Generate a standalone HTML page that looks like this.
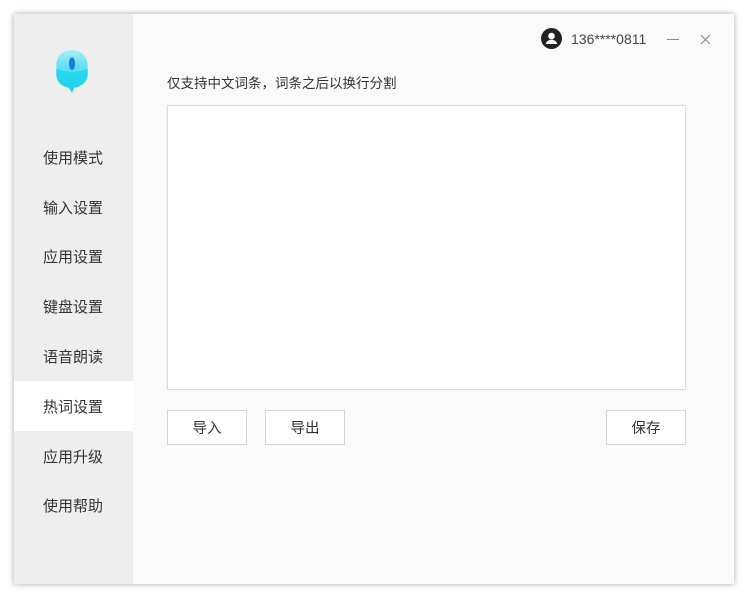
<!DOCTYPE html>
<html><head><meta charset="utf-8"><style>
*{margin:0;padding:0;box-sizing:border-box}
body{width:748px;height:598px;background:#fff;font-family:"Liberation Sans","Noto Sans CJK SC",sans-serif;position:relative;overflow:hidden}
.win{position:absolute;left:14px;top:14px;width:720px;height:570px;background:#fafafa;box-shadow:0 0 6px rgba(0,0,0,.35)}
.side{position:absolute;left:0;top:0;width:119px;height:570px;background:#eeeeee}
.item{position:absolute;left:0;width:119px;height:50px;line-height:54px;padding-left:29px;font-size:15px;color:#333}
.item.act{background:#fff}
.tip{position:absolute;left:153px;top:58px;font-size:13.5px;color:#333}
.ta{position:absolute;left:153px;top:91px;width:519px;height:285px;background:#fff;border:1px solid #ddd;box-shadow:0 0 2px rgba(0,0,0,.08)}
.btn{position:absolute;top:396px;width:80px;height:35px;border:1px solid #d5d5d5;background:#fff;font-size:14.5px;color:#333;text-align:center;line-height:36px}
.user{position:absolute;left:557px;top:17px;font-size:14px;color:#444}
</style></head><body>
<div class="win">
<div class="side">
<svg style="position:absolute;left:39px;top:34px" width="38" height="48" viewBox="0 0 36 46">
<defs><linearGradient id="g" x1="0" y1="0" x2="0" y2="1"><stop offset="0" stop-color="#a8f0f8"/><stop offset=".4" stop-color="#5fe0f2"/><stop offset="1" stop-color="#14c4e6"/></linearGradient></defs>
<path d="M18 2C9 2 3 8 3 17v8c0 7 5 12 12 13l3 5 2-5c7-1 13-6 13-13v-8C33 8 27 2 18 2z" fill="url(#g)"/>
<path d="M3 20c5 2 10 3 15 3s10-1 15-3v5c0 7-6 12-13 13l-2 5-3-5C8 37 3 32 3 25z" fill="#1ed4ee" opacity=".8"/>
<ellipse cx="18" cy="15" rx="3" ry="6" fill="#1a7fd8"/>
</svg>
<div class="item" style="top:118px">使用模式</div>
<div class="item" style="top:168px">输入设置</div>
<div class="item" style="top:217px">应用设置</div>
<div class="item" style="top:267px">键盘设置</div>
<div class="item" style="top:317px">语音朗读</div>
<div class="item act" style="top:367px">热词设置</div>
<div class="item" style="top:417px">应用升级</div>
<div class="item" style="top:466px">使用帮助</div>
</div>
<svg style="position:absolute;left:527px;top:14px" width="21" height="21" viewBox="0 0 21 21"><circle cx="10.5" cy="10.5" r="10.5" fill="#222"/><circle cx="10.5" cy="8" r="3.3" fill="#fff"/><path d="M4.8 16c.8-3 3-4.3 5.7-4.3s4.9 1.3 5.7 4.3z" fill="#fff"/></svg>
<div class="user">136****0811</div>
<div style="position:absolute;left:653px;top:25px;width:12px;height:1px;background:#888"></div>
<svg style="position:absolute;left:686px;top:20px" width="11" height="11" viewBox="0 0 11 11"><path d="M1 1L10 10M10 1L1 10" stroke="#888" stroke-width="1.1"/></svg>
<div class="tip">仅支持中文词条，词条之后以换行分割</div>
<div class="ta"></div>
<div class="btn" style="left:153px">导入</div>
<div class="btn" style="left:251px">导出</div>
<div class="btn" style="left:592px">保存</div>
</div>
</body></html>
